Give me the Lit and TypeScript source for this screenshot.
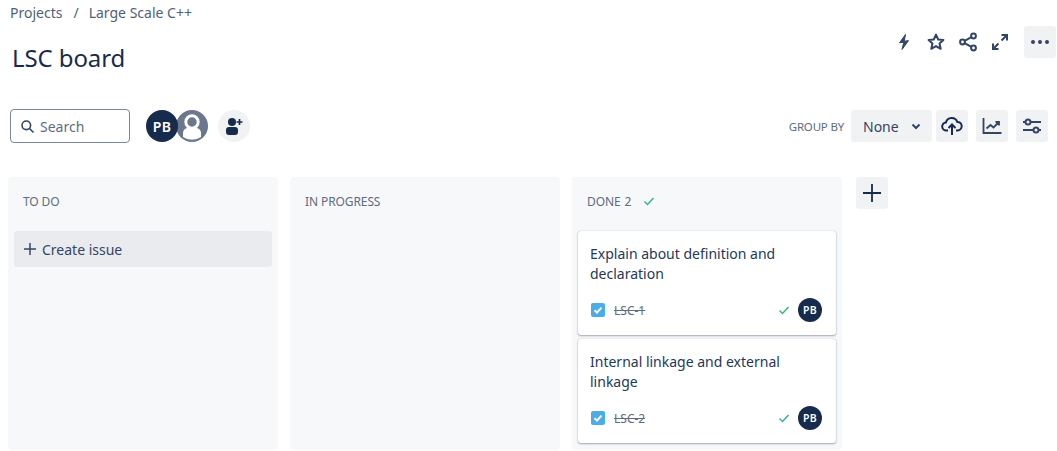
import { LitElement, html, css, svg } from "lit";
import { customElement } from "lit/decorators.js";

const check = html`<svg class="tick" width="12" height="12" viewBox="0 0 12 12"><path d="M1.5 6.5 4.5 9.5 10.5 3" fill="none" stroke="#36b37e" stroke-width="1.4"/></svg>`;

const card = (title1: string, title2: string, key: string) => html`
  <div class="card">
    <div class="card-title">${title1}<br />${title2}</div>
    <div class="card-foot">
      <svg class="cb" width="14" height="14" viewBox="0 0 14 14"><rect width="14" height="14" rx="2" fill="#4bade8"/><path d="M3.5 7.2 6 9.6 10.5 4.6" fill="none" stroke="#fff" stroke-width="2"/></svg>
      <span class="key">${key}</span>
      <span class="grow"></span>
      ${check}
      <span class="av-small">PB</span>
    </div>
  </div>`;

@customElement("app-root")
export class AppRoot extends LitElement {
  static styles = css`
    :host { display: block; width: 1057px; height: 451px; overflow: hidden; background: #fff; font-family: "Noto Sans", sans-serif; color: #172b4d; }
    .crumbs { display: flex; height: 26px; padding: 3px 0 0 10px; box-sizing: border-box; font-size: 14px; line-height: 20px; color: #505f79; }
    .crumbs .sep { margin: 0 10px 0 11px; }
    .head { display: flex; height: 56px; align-items: flex-start; justify-content: space-between; padding-right: 1px; }
    .title { margin: 12px 0 0 12px; font-size: 24px; line-height: 40px; font-weight: 400; letter-spacing: -0.1px; }
    .actions { display: flex; align-items: center; gap: 0; }
    .act { width: 32px; height: 32px; display: flex; align-items: center; justify-content: center; border-radius: 3px; }
    .act.bg { background: #f1f2f4; margin-left: 8px; }
    .toolbar { display: flex; align-items: center; height: 34px; margin-top: 27px; padding: 0 9px 0 10px; }
    .search { box-sizing: border-box; width: 120px; height: 34px; border: 1px solid #7a869a; border-radius: 4px; display: flex; align-items: center; padding-left: 9px; gap: 5px; font-size: 14px; color: #5e6c84; }
    .avs { display: flex; margin-left: 16px; }
    .av { width: 32px; height: 32px; border-radius: 50%; background: #172b4d; color: #fff; font-size: 14px; font-weight: 600; display: flex; align-items: center; justify-content: center; position: relative; z-index: 1; letter-spacing: 0.4px; }
    .av2 { margin-left: -2px; width: 32px; height: 32px; }
    .add { margin-left: 10px; width: 32px; height: 32px; border-radius: 50%; background: #f1f2f4; display: flex; align-items: center; justify-content: center; }
    .grow { flex: 1; }
    .gb { font-size: 11.5px; color: #5e6c84; margin-right: 7px; letter-spacing: -0.2px; }
    .sel { width: 81px; height: 32px; background: #f1f2f4; border-radius: 3px; display: flex; align-items: center; box-sizing: border-box; padding-left: 12px; font-size: 14px; gap: 12px; color: #344563; }
    .tb { width: 32px; height: 32px; background: #f1f2f4; border-radius: 3px; display: flex; align-items: center; justify-content: center; margin-left: 8px; }
    .tb.first { margin-left: 4px; }
    .board { display: flex; gap: 12px; margin-top: 34px; padding-left: 8px; align-items: flex-start; }
    .col { width: 270px; height: 273px; background: #f7f8f9; border-radius: 4px; box-sizing: border-box; padding: 0 6px; }
    .col-h { height: 48px; display: flex; align-items: center; padding-left: 9px; font-size: 12px; color: #5e6c84; letter-spacing: -0.1px; margin-bottom: 6px; }
    .col-h .n { margin-left: 4px; }
    .col-h .tick { margin-left: 12px; }
    .create { height: 36px; background: #e9ebee; border-radius: 3px; display: flex; align-items: center; padding-left: 10px; gap: 6px; font-size: 14px; color: #344563; }
    .card { box-sizing: border-box; height: 104px; background: #fff; border-radius: 3px; box-shadow: 0 1px 2px rgba(9,30,66,.35), 0 0 1px rgba(9,30,66,.31); padding: 13px 12px 0; margin-bottom: 4px; }
    .card-title { font-size: 14px; line-height: 20px; color: #253858; height: 40px; }
    .card-foot { display: flex; align-items: center; height: 24px; margin-top: 14px; }
    .cb { margin-left: 1px; }
    .key { margin-left: 9px; font-size: 12px; color: #5e6c84; text-decoration: line-through; }
    .av-small { width: 24px; height: 24px; border-radius: 50%; background: #172b4d; color: #fff; font-size: 10.5px; font-weight: 600; display: flex; align-items: center; justify-content: center; margin-left: 8px; margin-right: 2px; letter-spacing: 0.3px; }
    .plus { width: 32px; height: 32px; background: #f1f2f4; border-radius: 3px; display: flex; align-items: center; justify-content: center; margin-left: 2px; }
  `;

  render() {
    const ink = "#344563";
    return html`
      <div class="crumbs"><span>Projects</span><span class="sep">/</span><span>Large Scale C++</span></div>
      <div class="head">
        <h1 class="title">LSC board</h1>
        <div class="actions">
          <div class="act"><svg width="16" height="18" viewBox="0 0 16 18"><path d="M9.5 1.5 3.5 9.8 7.8 9.2 6 16.5 12.5 7.6 8.2 8.3Z" fill="${ink}" stroke="${ink}" stroke-width="1" stroke-linejoin="round"/></svg></div>
          <div class="act"><svg width="20" height="20" viewBox="0 0 20 20"><path d="M10 2.6 12.2 7.5 17.4 8 13.5 11.5 14.7 16.8 10 14.1 5.3 16.8 6.5 11.5 2.6 8 7.8 7.5Z" fill="none" stroke="${ink}" stroke-width="2" stroke-linejoin="round"/></svg></div>
          <div class="act"><svg width="20" height="20" viewBox="0 0 20 20"><g fill="none" stroke="${ink}" stroke-width="2"><circle cx="4.5" cy="10" r="2.4"/><circle cx="15.5" cy="4" r="2.4"/><circle cx="15.5" cy="16" r="2.4"/><path d="M6.6 8.9 13.4 5.2M6.6 11.1 13.4 14.8"/></g></svg></div>
          <div class="act"><svg width="18" height="18" viewBox="0 0 18 18"><g fill="none" stroke="${ink}" stroke-width="2"><path d="M10.5 2H16V7.5M16 2 10.5 7.5"/><path d="M2 10.5V16H7.5M2 16 7.5 10.5"/></g></svg></div>
          <div class="act bg"><svg width="20" height="6" viewBox="0 0 20 6"><g fill="${ink}"><circle cx="3" cy="3" r="2"/><circle cx="10" cy="3" r="2"/><circle cx="17" cy="3" r="2"/></g></svg></div>
        </div>
      </div>
      <div class="toolbar">
        <div class="search"><svg width="15" height="15" viewBox="0 0 15 15"><g fill="none" stroke="${ink}" stroke-width="1.6"><circle cx="6.3" cy="6.3" r="4.3"/><path d="M9.5 9.5 13.5 13.5"/></g></svg><span>Search</span></div>
        <div class="avs">
          <div class="av">PB</div>
          <svg class="av2" viewBox="0 0 32 32"><circle cx="16" cy="16" r="16" fill="#6b778c"/><circle cx="16" cy="12" r="6.2" fill="none" stroke="#fff" stroke-width="3"/><path d="M7 27V23a5 5 0 0 1 5-5h8a5 5 0 0 1 5 5v4a16 16 0 0 1-18 0Z" fill="#fff"/></svg>
        </div>
        <div class="add"><svg width="20" height="20" viewBox="0 0 20 20"><circle cx="8" cy="6" r="4" fill="#172b4d"/><path d="M2 14a3 3 0 0 1 3-3h6a3 3 0 0 1 3 3v2a3 3 0 0 1-3 3H5a3 3 0 0 1-3-3Z" fill="#172b4d"/><path d="M15.5 3v6M12.5 6h6" stroke="#172b4d" stroke-width="1.7"/></svg></div>
        <span class="grow"></span>
        <span class="gb">GROUP BY</span>
        <div class="sel"><span>None</span><svg width="10" height="7" viewBox="0 0 10 7"><path d="M1.5 1.5 5 5 8.5 1.5" fill="none" stroke="${ink}" stroke-width="2"/></svg></div>
        <div class="tb first"><svg width="22" height="20" viewBox="0 0 22 20"><path d="M7 14.5H5.5a4 4 0 0 1-.6-8 6 6 0 0 1 11.4-.6 4.3 4.3 0 0 1 .2 8.6H15" fill="none" stroke="#172b4d" stroke-width="2"/><path d="M11 19V9M7.5 12 11 8.5 14.5 12" fill="none" stroke="#172b4d" stroke-width="2"/></svg></div>
        <div class="tb"><svg width="20" height="18" viewBox="0 0 20 18"><path d="M1.5 1V16H19.5" fill="none" stroke="${ink}" stroke-width="1.8"/><path d="M4.5 11.5 8.5 8 11.5 10.5 16.5 5.5M13.5 5H17V8.5" fill="none" stroke="${ink}" stroke-width="1.8"/></svg></div>
        <div class="tb"><svg width="20" height="16" viewBox="0 0 20 16"><g fill="none" stroke="${ink}" stroke-width="2"><path d="M1 4H3M9 4H19M1 12H11M17 12H19"/><circle cx="6" cy="4" r="2.5"/><circle cx="14" cy="12" r="2.5"/></g></svg></div>
      </div>
      <div class="board">
        <div class="col">
          <div class="col-h">TO DO</div>
          <div class="create"><svg width="12" height="12" viewBox="0 0 12 12"><path d="M6 0V12M0 6H12" stroke="${ink}" stroke-width="1.5"/></svg><span>Create issue</span></div>
        </div>
        <div class="col"><div class="col-h">IN PROGRESS</div></div>
        <div class="col">
          <div class="col-h"><span>DONE</span><span class="n">2</span>${check}</div>
          ${card("Explain about definition and", "declaration", "LSC-1")}
          ${card("Internal linkage and external", "linkage", "LSC-2")}
        </div>
        <div class="plus"><svg width="18" height="18" viewBox="0 0 18 18"><path d="M9 0V18M0 9H18" stroke="#172b4d" stroke-width="1.8"/></svg></div>
      </div>
    `;
  }
}
